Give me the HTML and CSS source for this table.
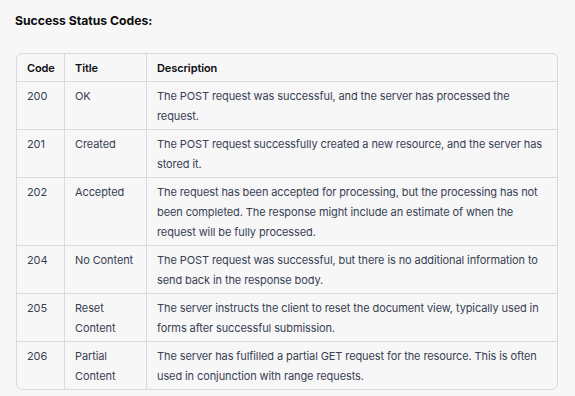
FILE: index.html
```html
<!DOCTYPE html>
<html lang="en">
<head>
  <meta charset="UTF-8">
  <title>Success Status Codes</title>
  <link rel="stylesheet" href="styles.css">
</head>
<body>
  <div class="answer">
    <div class="section-title">Success Status Codes:</div>
    <table class="codes-table">
      <colgroup>
        <col class="col-code">
        <col class="col-title">
        <col>
      </colgroup>
      <thead>
        <tr>
          <th>Code</th>
          <th>Title</th>
          <th>Description</th>
        </tr>
      </thead>
      <tbody>
        <tr>
          <td>200</td>
          <td>OK</td>
          <td>The POST request was successful, and the server has processed the request.</td>
        </tr>
        <tr>
          <td>201</td>
          <td>Created</td>
          <td>The POST request successfully created a new resource, and the server has stored it.</td>
        </tr>
        <tr>
          <td>202</td>
          <td>Accepted</td>
          <td>The request has been accepted for processing, but the processing has not been completed. The response might include an estimate of when the request will be fully processed.</td>
        </tr>
        <tr>
          <td>204</td>
          <td>No Content</td>
          <td>The POST request was successful, but there is no additional information to send back in the response body.</td>
        </tr>
        <tr>
          <td>205</td>
          <td>Reset Content</td>
          <td>The server instructs the client to reset the document view, typically used in forms after successful submission.</td>
        </tr>
        <tr>
          <td>206</td>
          <td>Partial Content</td>
          <td>The server has fulfilled a partial GET request for the resource. This is often used in conjunction with range requests.</td>
        </tr>
      </tbody>
    </table>
  </div>
</body>
</html>
```

FILE: styles.css
```css
:root {
  --bg: #f7f7f8;
  --border: #d9d9e3;
  --text: #374151;
  --heading: #0d0d0d;
}
html, body {
  margin: 0; padding: 0;
  font-family: 'Inter', sans-serif;
  background: var(--bg);
  color: var(--text);
}
.answer {
  padding: 12px 17px 0 16px;
}
.section-title {
  font-size: 12.2px;
  font-weight: 700;
  color: var(--heading);
  line-height: 18px;
  margin-left: -1px;
  margin-bottom: 23px;
}
.codes-table {
  width: 100%;
  table-layout: fixed;
  border: 1px solid var(--border);
  border-radius: 6px;
  border-spacing: 0;
  font-size: 11px;
  letter-spacing: -0.1px;
  line-height: 20px;
}
.col-code { width: 47px; }
.col-title { width: 82px; }
.codes-table th,
.codes-table td {
  text-align: left;
  vertical-align: top;
  padding: 4px 11px 3px 10px;
  border-left: 1px solid var(--border);
  border-top: 1px solid var(--border);
}
.codes-table th:first-child,
.codes-table td:first-child {
  border-left: none;
}
.codes-table thead th {
  border-top: none;
  font-weight: 600;
  color: var(--heading);
}
```
